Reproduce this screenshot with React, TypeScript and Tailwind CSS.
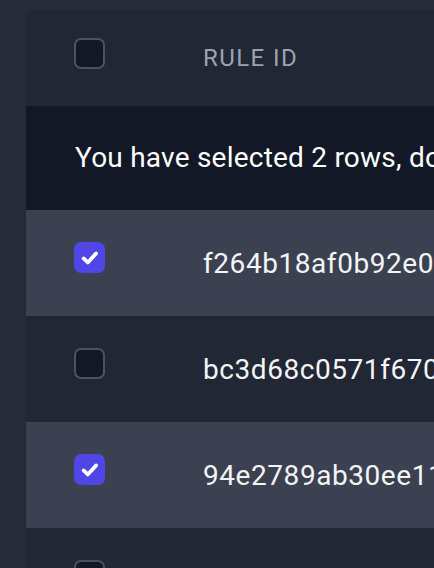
import React from 'react';

type Row = { id: string; selected: boolean };

const rows: Row[] = [
  { id: 'f264b18af0b92e09d1c4', selected: true },
  { id: 'bc3d68c0571f670a8e21', selected: false },
  { id: '94e2789ab30ee11c57fa', selected: true },
  { id: '0d7ac3e51b96f2e4c803', selected: false },
];

const Checkbox: React.FC<{ checked: boolean }> = ({ checked }) =>
  checked ? (
    <span className="flex h-[31px] w-[31px] shrink-0 items-center justify-center rounded-[7px] bg-[#4f46e5]">
      <svg width="22" height="22" viewBox="0 0 20 20" fill="none">
        <path d="M4.2 10.4l3.8 3.6 7.6-8.2" stroke="white" strokeWidth="3.4" strokeLinecap="round" strokeLinejoin="round" />
      </svg>
    </span>
  ) : (
    <span className="block h-[31px] w-[31px] shrink-0 rounded-[7px] border-2 border-[#4b5263] bg-[#131826]" />
  );

export default function App() {
  return (
    <div
      className="h-screen overflow-hidden bg-[#262b39] pl-[25px] pt-[9px]"
      style={{ fontFamily: 'Roboto, "Noto Sans", sans-serif' }}
    >
      <div className="flex flex-col overflow-hidden rounded-tl-[14px] border-l border-t border-[#30354333] bg-[#222735]">
        {/* header */}
        <div className="flex h-[96px] shrink-0">
          <div className="w-[177px] shrink-0 pl-[48px] pt-[28px]">
            <Checkbox checked={false} />
          </div>
          <div className="flex items-center text-[24px] uppercase tracking-[0.06em] text-[#9ca3af]">
            Rule ID
          </div>
        </div>

        {/* selection banner */}
        <div className="flex h-[104px] shrink-0 items-center whitespace-nowrap bg-[#131826] pl-[49px] text-[28px] tracking-[0.008em] text-white">
          You have selected 2 rows, do you want to delete them?
        </div>

        {rows.map((r) => (
          <div
            key={r.id}
            className={`flex h-[106px] shrink-0 ${r.selected ? 'bg-[#3b4150]' : 'bg-[#222735]'}`}
          >
            <div className="w-[177px] shrink-0 pl-[48px] pt-[32px]">
              <Checkbox checked={r.selected} />
            </div>
            <div className="flex items-center whitespace-nowrap pt-[2px] text-[28px] tracking-[0.02em] text-[#f3f4f6]">
              {r.id}
            </div>
          </div>
        ))}
      </div>
    </div>
  );
}
